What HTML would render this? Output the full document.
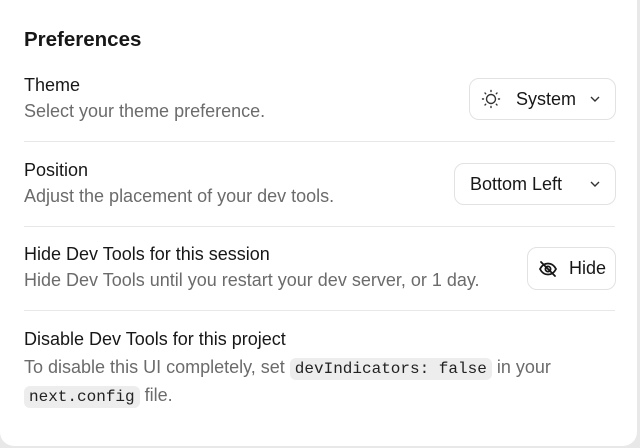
<!DOCTYPE html>
<html><head><style>
body{margin:0;width:640px;height:448px;background:#e8e8e8;font-family:"Liberation Sans",sans-serif;overflow:hidden;position:relative}
.p{position:absolute;left:0;top:0;width:637px;height:446px;background:#fff;border-radius:0 0 14px 14px}
.t{position:absolute;left:24px;top:28px;font-size:20.5px;font-weight:bold;color:#171717}
.l{position:absolute;left:24px;font-size:18px;color:#171717}
.d{position:absolute;left:24px;font-size:18px;color:#6b6b6b}
.hr{position:absolute;left:24px;width:591px;height:1px;background:#e8e8e8}
.b{position:absolute;border:1px solid #e2e2e2;border-radius:10px;box-sizing:border-box;font-size:18px;color:#171717;display:flex;align-items:center}
code{font-family:"Liberation Mono",monospace;font-size:16px;background:#ededed;border-radius:6px;padding:2px 5px;color:#222}
</style></head><body>
<div class="p">
<div class="t">Preferences</div>
<div class="l" style="top:75px">Theme</div>
<div class="d" style="top:101px">Select your theme preference.</div>
<div class="b" style="left:469px;top:78px;width:147px;height:42px">
<svg style="position:absolute;left:11px;top:10px" width="20" height="20" viewBox="0 0 20 20" fill="none" stroke="#333" stroke-width="1.4" stroke-linecap="round"><circle cx="10" cy="10" r="4.5"/><path d="M10 1.5v1M10 17.5v1M1.5 10h1M17.5 10h1M4 4l.7.7M15.3 15.3l.7.7M4 16l.7-.7M15.3 4.7l.7-.7"/></svg>
<span style="position:absolute;left:46px">System</span>
<svg style="position:absolute;left:120px;top:16px" width="10" height="8" viewBox="0 0 10 8" fill="none" stroke="#333" stroke-width="1.4"><path d="M1 2l4 4 4-4"/></svg></div>
<div class="hr" style="top:141px"></div>
<div class="l" style="top:160px">Position</div>
<div class="d" style="top:186px">Adjust the placement of your dev tools.</div>
<div class="b" style="left:454px;top:163px;width:162px;height:42px">
<span style="position:absolute;left:15px">Bottom Left</span>
<svg style="position:absolute;left:135px;top:16px" width="10" height="8" viewBox="0 0 10 8" fill="none" stroke="#333" stroke-width="1.4"><path d="M1 2l4 4 4-4"/></svg></div>
<div class="hr" style="top:226px"></div>
<div class="l" style="top:244px">Hide Dev Tools for this session</div>
<div class="d" style="top:270px">Hide Dev Tools until you restart your dev server, or 1 day.</div>
<div class="b" style="left:527px;top:247px;width:89px;height:43px">
<svg style="position:absolute;left:10px;top:11px" width="20" height="20" viewBox="0 0 20 20" fill="none" stroke="#171717" stroke-width="1.8" stroke-linecap="round"><path d="M2 10c2-4 5-5.5 8-5.5s6 1.5 8 5.5c-2 4-5 5.5-8 5.5S4 14 2 10z"/><circle cx="10" cy="10" r="2.6"/><path d="M3 3l14 14"/></svg>
<span style="position:absolute;left:41px">Hide</span></div>
<div class="hr" style="top:310px"></div>
<div class="l" style="top:329px">Disable Dev Tools for this project</div>
<div class="d" style="top:354px;line-height:26px;width:590px">To disable this UI completely, set <code>devIndicators: false</code> in your<br><code>next.config</code> file.</div>
</div>
</body></html>
